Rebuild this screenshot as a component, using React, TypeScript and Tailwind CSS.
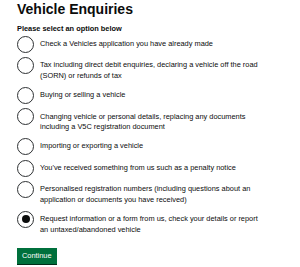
import React, { useState } from 'react';

const options = [
  'Check a Vehicles application you have already made',
  'Tax including direct debit enquiries, declaring a vehicle off the road (SORN) or refunds of tax',
  'Buying or selling a vehicle',
  'Changing vehicle or personal details, replacing any documents including a V5C registration document',
  'Importing or exporting a vehicle',
  "You've received something from us such as a penalty notice",
  'Personalised registration numbers (including questions about an application or documents you have received)',
  'Request information or a form from us, check your details or report an untaxed/abandoned vehicle',
];

function RadioItem({
  label,
  checked,
  onSelect,
}: {
  label: string;
  checked: boolean;
  onSelect: () => void;
}) {
  return (
    <label className="flex items-start gap-[6px] mb-[4.5px] cursor-pointer" onClick={onSelect}>
      <span className="w-[17px] h-[17px] shrink-0 rounded-full border border-[#2e3133] bg-white flex items-center justify-center">
        {checked && <span className="w-[8px] h-[8px] rounded-full bg-[#0b0c0c]" />}
      </span>
      <span className="w-[224px] pt-[3.25px] pb-[1px] text-[7.4px] leading-[10.5px] text-[#0b0c0c]">
        {label}
      </span>
    </label>
  );
}

export default function App() {
  const [selected, setSelected] = useState(7);

  return (
    <div
      className="w-[300px] h-[267px] bg-white px-[17px] pt-[2px] overflow-hidden"
      style={{ fontFamily: '"Liberation Sans", Arial, sans-serif' }}
    >
      <h1 className="text-[14px] leading-[15px] font-bold text-[#0b0c0c]">Vehicle Enquiries</h1>
      <p className="mt-[7px] text-[7.4px] leading-[10px] font-bold text-[#0b0c0c]">
        Please select an option below
      </p>

      <div className="mt-[1.5px] flex flex-col">
        {options.map((opt, i) => (
          <RadioItem key={i} label={opt} checked={selected === i} onSelect={() => setSelected(i)} />
        ))}
      </div>

      <button className="mt-[6.5px] px-[5px] py-[3px] bg-[#00703c] text-white text-[7.4px] leading-[10px] shadow-[0_1px_0_#002d18]">
        Continue
      </button>
    </div>
  );
}
